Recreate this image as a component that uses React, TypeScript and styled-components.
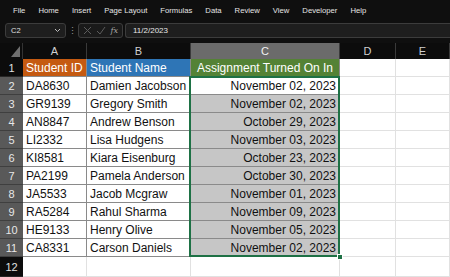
import React from "react";
import styled, { createGlobalStyle, css } from "styled-components";

const GlobalStyle = createGlobalStyle`
  html, body {
    margin: 0;
    padding: 0;
    background: #0d0d0d;
    overflow: hidden;
  }
  * {
    box-sizing: border-box;
  }
`;

const Window = styled.div`
  width: 450px;
  height: 277px;
  display: flex;
  flex-direction: column;
  background: #0d0d0d;
  font-family: "Liberation Sans", Arial, sans-serif;
  overflow: hidden;
`;

const MenuBar = styled.div`
  height: 20px;
  display: flex;
  align-items: center;
  gap: 13px;
  padding: 0 0 0 13px;
  background: #0f0f0f;
`;

const MenuItem = styled.span`
  font-size: 7.7px;
  color: #e4e4e4;
  white-space: nowrap;
`;

const FormulaBar = styled.div`
  height: 23px;
  display: flex;
  align-items: flex-start;
  padding: 3px 0 0 5px;
  background: #0f0f0f;
`;

const NameBox = styled.div`
  width: 61px;
  height: 15px;
  display: flex;
  align-items: center;
  justify-content: space-between;
  padding: 0 4px 0 5px;
  background: #1e1e1e;
  border: 1px solid #3c3c3c;
  border-radius: 3px;
  color: #e0e0e0;
  font-size: 7.5px;
`;

const Dots = styled.div`
  width: 12px;
  height: 15px;
  display: flex;
  align-items: center;
  justify-content: center;
  color: #9a9a9a;
  font-size: 9px;
`;

const FxBox = styled.div`
  width: 45px;
  height: 15px;
  display: flex;
  align-items: center;
  justify-content: space-around;
  padding: 0 2px;
  background: #1a1a1a;
  border: 1px solid #3c3c3c;
  border-radius: 3px;
`;

const Fx = styled.span`
  font-family: "DejaVu Serif", "Liberation Serif", serif;
  font-style: italic;
  font-size: 8px;
  color: #a8a8a8;
`;

const FormulaInput = styled.div`
  flex: 1;
  height: 15px;
  margin-left: 2px;
  display: flex;
  align-items: center;
  padding-left: 7px;
  background: #1e1e1e;
  border: 1px solid #3c3c3c;
  border-right: none;
  border-radius: 3px 0 0 3px;
  color: #e6e6e6;
  font-size: 8px;
`;

const Sheet = styled.div`
  flex: 1;
  display: grid;
  grid-template-columns: 23px 64px 104px 149px 56px 1fr;
  grid-template-rows: 16px repeat(11, 18px) 1fr;
  background: #ffffff;
`;

const Corner = styled.div`
  background: #0c0c0c;
  border-right: 1px solid #333;
  display: flex;
  align-items: flex-end;
  justify-content: flex-end;
  padding: 0 2px 2px 0;
`;

const ColHead = styled.div<{ $active?: boolean }>`
  background: ${(p) => (p.$active ? "#6b6b6b" : "#0c0c0c")};
  color: ${(p) => (p.$active ? "#f2f2f2" : "#d0d0d0")};
  border-right: 1px solid #3a3a3a;
  font-size: 11px;
  display: flex;
  align-items: center;
  justify-content: center;
`;

const RowHead = styled.div<{ $active?: boolean }>`
  background: ${(p) => (p.$active ? "#595959" : "#0c0c0c")};
  color: ${(p) => (p.$active ? "#e8e8e8" : "#e0e0e0")};
  border-bottom: 1px solid ${(p) => (p.$active ? "#3f3f3f" : "#262626")};
  font-size: 11px;
  display: flex;
  align-items: center;
  justify-content: center;
`;

type Sel = "top" | "mid" | "bottom";

const SEL = "#1e7145";

const Cell = styled.div<{
  $fill?: string;
  $color?: string;
  $line?: string;
  $align?: "left" | "right" | "center";
  $sel?: Sel;
}>`
  position: relative;
  background: ${(p) => p.$fill ?? "#ffffff"};
  color: ${(p) => p.$color ?? "#111111"};
  border-right: 1px solid ${(p) => p.$line ?? "#e1e1e1"};
  border-bottom: 1px solid ${(p) => p.$line ?? "#e1e1e1"};
  font-size: 12px;
  white-space: nowrap;
  display: flex;
  align-items: center;
  justify-content: ${(p) =>
    p.$align === "right" ? "flex-end" : p.$align === "center" ? "center" : "flex-start"};
  padding: 1px 3px 0 3px;

  ${(p) =>
    p.$sel &&
    css`
      &::after {
        content: "";
        position: absolute;
        left: -2px;
        right: -1px;
        top: ${p.$sel === "top" ? "-1px" : "-1px"};
        bottom: ${p.$sel === "bottom" ? "-1px" : "-1px"};
        border-left: 2px solid ${SEL};
        border-right: 2px solid ${SEL};
        border-top: ${p.$sel === "top" ? `2px solid ${SEL}` : "none"};
        border-bottom: ${p.$sel === "bottom" ? `2px solid ${SEL}` : "none"};
        pointer-events: none;
        z-index: 2;
      }
    `}
`;

const FillHandle = styled.div`
  position: absolute;
  right: -4px;
  bottom: -4px;
  width: 6px;
  height: 6px;
  background: ${SEL};
  border: 1px solid #ffffff;
  z-index: 3;
`;

const menus = [
  "File",
  "Home",
  "Insert",
  "Page Layout",
  "Formulas",
  "Data",
  "Review",
  "View",
  "Developer",
  "Help",
];

const students = [
  ["DA8630", "Damien Jacobson", "November 02, 2023"],
  ["GR9139", "Gregory Smith", "November 02, 2023"],
  ["AN8847", "Andrew Benson", "October 29, 2023"],
  ["LI2332", "Lisa Hudgens", "November 03, 2023"],
  ["KI8581", "Kiara Eisenburg", "October 23, 2023"],
  ["PA2199", "Pamela Anderson", "October 30, 2023"],
  ["JA5533", "Jacob Mcgraw", "November 01, 2023"],
  ["RA5284", "Rahul Sharma", "November 09, 2023"],
  ["HE9133", "Henry Olive", "November 05, 2023"],
  ["CA8331", "Carson Daniels", "November 02, 2023"],
];

const TABLE_LINE = "#8a8a8a";

export default function App() {
  return (
    <Window>
      <GlobalStyle />
      <MenuBar>
        {menus.map((m) => (
          <MenuItem key={m}>{m}</MenuItem>
        ))}
      </MenuBar>

      <FormulaBar>
        <NameBox>
          <span>C2</span>
          <svg width="7" height="5" viewBox="0 0 7 5">
            <path d="M1 1 L3.5 3.5 L6 1" stroke="#bdbdbd" strokeWidth="1" fill="none" />
          </svg>
        </NameBox>
        <Dots>⋮</Dots>
        <FxBox>
          <svg width="9" height="9" viewBox="0 0 9 9">
            <path d="M1 1 L8 8 M8 1 L1 8" stroke="#5c5c5c" strokeWidth="1" />
          </svg>
          <svg width="10" height="9" viewBox="0 0 10 9">
            <path d="M1 5 L4 8 L9 1" stroke="#5c5c5c" strokeWidth="1" fill="none" />
          </svg>
          <Fx>fx</Fx>
        </FxBox>
        <FormulaInput>11/2/2023</FormulaInput>
      </FormulaBar>

      <Sheet>
        <Corner>
          <svg width="9" height="11" viewBox="0 0 9 11">
            <path d="M9 0 L9 11 L0 11 Z" fill="#6f6f6f" />
          </svg>
        </Corner>
        <ColHead>A</ColHead>
        <ColHead>B</ColHead>
        <ColHead $active>C</ColHead>
        <ColHead>D</ColHead>
        <ColHead>E</ColHead>

        <RowHead>1</RowHead>
        <Cell $fill="#c55a11" $color="#ffffff" $line={TABLE_LINE}>
          Student ID
        </Cell>
        <Cell $fill="#2e75b6" $color="#ffffff" $line={TABLE_LINE}>
          Student Name
        </Cell>
        <Cell $fill="#548235" $color="#ffffff" $line={TABLE_LINE} $align="center">
          Assignment Turned On In
        </Cell>
        <Cell />
        <Cell />

        {students.map(([id, name, date], i) => {
          const last = i === students.length - 1;
          const sel: Sel = i === 0 ? "top" : last ? "bottom" : "mid";
          return (
            <React.Fragment key={id}>
              <RowHead $active>{i + 2}</RowHead>
              <Cell $line={TABLE_LINE}>{id}</Cell>
              <Cell $line={TABLE_LINE}>{name}</Cell>
              <Cell
                $line={TABLE_LINE}
                $align="right"
                $fill={i === 0 ? "#ffffff" : "#c6c6c6"}
                $sel={sel}
              >
                {date}
                {last && <FillHandle />}
              </Cell>
              <Cell />
              <Cell />
            </React.Fragment>
          );
        })}

        <RowHead>12</RowHead>
        <Cell />
        <Cell />
        <Cell />
        <Cell />
        <Cell />
      </Sheet>
    </Window>
  );
}
